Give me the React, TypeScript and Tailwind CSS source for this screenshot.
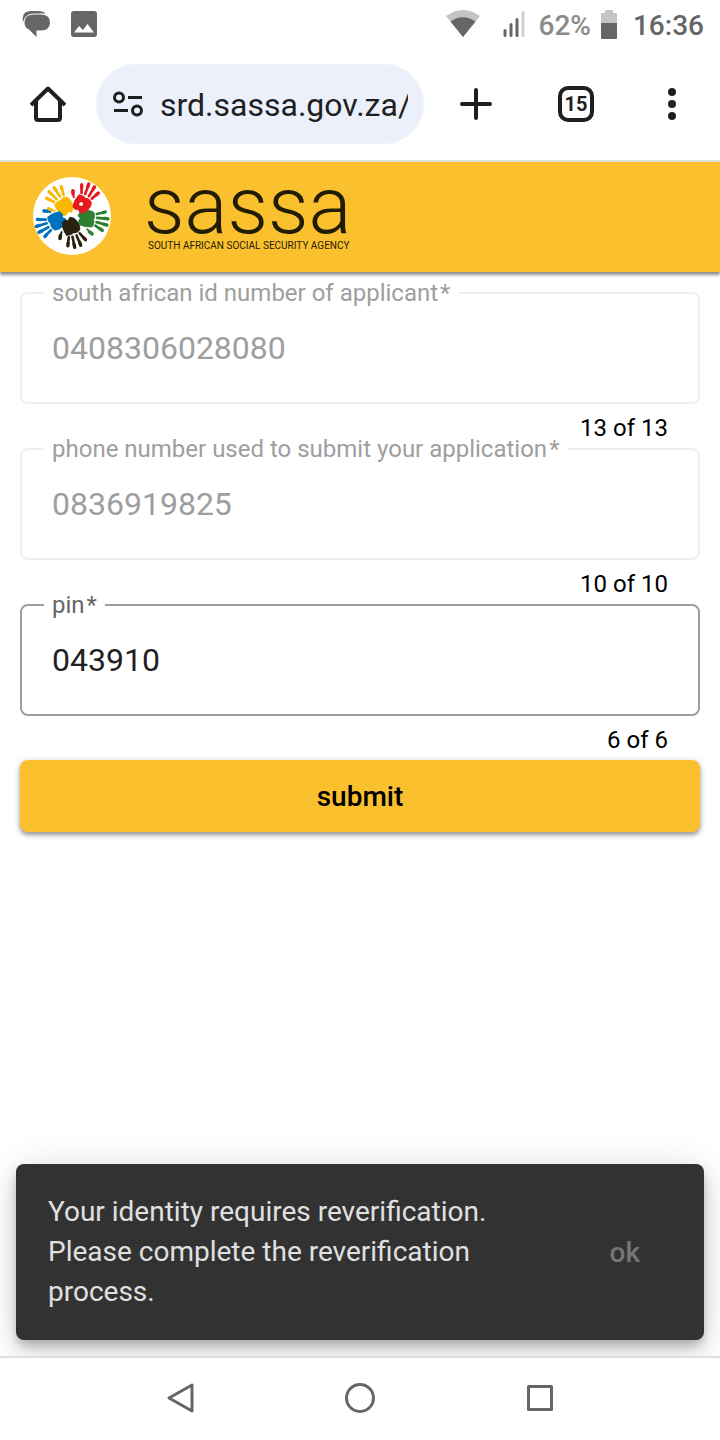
import { useState } from "react";

type FieldProps = {
  id: string;
  label: string;
  initial: string;
  max: number;
  disabled?: boolean;
};

function Field({ id, label, initial, max, disabled }: FieldProps) {
  const [value, setValue] = useState(initial);
  return (
    <div>
      <fieldset
        className={`min-w-0 rounded-lg border-2 px-[22px] pb-2.5 ${disabled ? "border-[#f0f0f0]" : "border-[#9e9e9e]"}`}
      >
        <legend
          className={`px-2 text-2xl leading-5 whitespace-nowrap ${disabled ? "text-[#9e9e9e]" : "text-[#666666]"}`}
        >
          <label htmlFor={id}>
            {label}
            <span className="ml-0.5">*</span>
          </label>
        </legend>
        <input
          id={id}
          value={value}
          maxLength={max}
          disabled={disabled}
          inputMode="numeric"
          onChange={(e) => setValue(e.target.value)}
          className="block h-[89px] w-full bg-transparent px-2 text-[32px] text-[#212121] outline-none disabled:text-[#9e9e9e]"
        />
      </fieldset>
      <p className="px-8 pt-[13px] text-right text-2xl leading-[22px] text-black">
        {value.length} of {max}
      </p>
    </div>
  );
}

const hands = [
  { color: "#fbb800", x: 120, y: 106, angle: -38, flip: 1 },
  { color: "#0071bd", x: 96, y: 154, angle: 246, flip: -1 },
  { color: "#28220f", x: 142, y: 172, angle: 161, flip: -1 },
  { color: "#2e8031", x: 191, y: 146, angle: 99, flip: -1 },
  { color: "#e31b1f", x: 176, y: 100, angle: 27, flip: 1 },
];

function HandsLogo() {
  return (
    <svg viewBox="27 21 234 234" className="size-[78px] shrink-0" aria-hidden="true">
      <circle cx="144" cy="138" r="117" fill="#fff" />
      {hands.map((h) => (
        <g
          key={h.color}
          transform={`translate(${h.x} ${h.y}) rotate(${h.angle}) scale(${h.flip} 1)`}
          fill={h.color}
          stroke={h.color}
        >
          <path
            d="M-22-18Q-8-23 0-18Q11-23 22-15Q28-2 23 10Q18 27 5 30L-3 22Q-11 31-22 22Q-28 3-22-18Z"
            strokeWidth="2"
            strokeLinejoin="round"
          />
          <g fill="none" strokeLinecap="round">
            <path d="M-17-26L-27-46M-6-28L-10-60M7-28L9-60M18-25L27-47" strokeWidth="8" />
            <path d="M-24-41L-28-49M-9-50L-10-60M9-50L9-60M25-42L28-49" strokeWidth="10" />
            <path d="M-32-4L-40-14" strokeWidth="6" />
            <path d="M-39-13L-43-20" strokeWidth="11" />
          </g>
        </g>
      ))}
      <path d="M165 101Q170 94 177 98L176 107L167 107Z" fill="#fff" />
    </svg>
  );
}

function StatusBar() {
  return (
    <div className="flex h-12 items-center pr-4 pl-[22px] text-[28px] leading-8 font-medium">
      <svg viewBox="0 0 28 28" className="size-7" aria-hidden="true">
        <path d="M1 12Q-1 1 9 1H16Q22 1 23.500 3.500H12Q3 3.500 1 12Z" fill="#666" />
        <path d="M12 4.500H18.500Q28 4.500 28 12.500Q28 20.500 18.500 20.500H14.500V27L7 19.500Q2.500 18 2.500 12.500Q2.500 4.500 12 4.500Z" fill="#666" />
      </svg>
      <svg viewBox="0 0 26 26" className="ml-[21px] size-[26px]" aria-hidden="true">
        <rect width="26" height="26" rx="3" fill="#666" />
        <path d="M3 21.500L8 15L12 19L16.500 13L23 21.500Z" fill="#fff" />
      </svg>
      <svg viewBox="0 0 34 28" className="ml-auto h-7 w-[34px]" aria-hidden="true">
        <path d="M0 6Q17-6 34 6L17 27Z" fill="#c4c4c4" />
        <path d="M4.500 11.500Q17 3 29.500 11.500L17 27Z" fill="#666" />
      </svg>
      <svg viewBox="0 0 22 28" className="ml-[23px] h-7 w-[22px]" aria-hidden="true">
        <g strokeWidth="3" strokeLinecap="round" stroke="#666">
          <path d="M2 20.500V25.500M8 14.500V25.500M14 9.500V25.500" />
          <path d="M20 2.500V25.500" stroke="#d0d0d0" />
        </g>
      </svg>
      <span className="ml-3.5 pt-1 text-[#8a8a8a]">62%</span>
      <svg viewBox="0 0 16 29" className="ml-2.5 h-[29px] w-4" aria-hidden="true">
        <path d="M4 0H12V3H16V14H0V3H4Z" fill="#c4c4c4" />
        <path d="M0 13H16V28Q16 29 15 29H1Q0 29 0 28Z" fill="#666" />
      </svg>
      <span className="ml-4 pt-1 font-medium text-[#666666]">16:36</span>
    </div>
  );
}

function BrowserBar() {
  return (
    <div className="flex h-28 items-center text-[#1f1f1f]">
      <button aria-label="Home" className="flex h-20 w-24 shrink-0 items-center justify-center">
        <svg viewBox="0 0 36 36" className="size-9" fill="none" stroke="currentColor" strokeWidth="4" aria-hidden="true">
          <path d="M1 19L18 2.500L35 19" strokeLinejoin="round" />
          <path d="M6 15V32Q6 34 8 34H28Q30 34 30 32V15" />
        </svg>
      </button>
      <div className="flex h-20 min-w-0 flex-1 items-center rounded-full bg-[#ecf0fa] px-4">
        <button aria-label="Site information" className="shrink-0">
          <svg viewBox="0 0 32 32" className="size-8" fill="none" stroke="currentColor" strokeWidth="3" aria-hidden="true">
            <circle cx="7" cy="9.500" r="4.500" />
            <path d="M16 9.500H30M2 22.500H16" />
            <circle cx="25" cy="22.500" r="4.500" />
          </svg>
        </button>
        <input
          aria-label="Address"
          defaultValue="srd.sassa.gov.za/"
          className="ml-4 min-w-0 flex-1 bg-transparent pt-0.5 text-[32px] outline-none"
        />
      </div>
      <button aria-label="New tab" className="flex h-20 w-[104px] shrink-0 items-center justify-center">
        <svg viewBox="0 0 32 32" className="size-8" stroke="currentColor" strokeWidth="4" strokeLinecap="round" aria-hidden="true">
          <path d="M16 2V30M2 16H30" />
        </svg>
      </button>
      <button aria-label="Open tabs" className="flex h-20 w-24 shrink-0 items-center justify-center">
        <span className="flex size-9 items-center justify-center rounded-[10px] border-4 border-[#1f1f1f] text-xl leading-5 font-bold">
          15
        </span>
      </button>
      <button aria-label="Menu" className="flex h-20 w-24 shrink-0 items-center justify-center">
        <svg viewBox="0 0 8 32" className="h-8 w-2" fill="currentColor" aria-hidden="true">
          <circle cx="4" cy="4" r="4" />
          <circle cx="4" cy="16" r="4" />
          <circle cx="4" cy="28" r="4" />
        </svg>
      </button>
    </div>
  );
}

export default function App() {
  return (
    <div className="flex min-h-screen flex-col bg-white font-['Roboto',sans-serif]">
      <StatusBar />
      <BrowserBar />
      <header className="flex h-28 items-center border-t-2 border-[#e0e0e0] bg-[#fbc02d] pb-0.5 pl-[33px] shadow-[0_3px_3px_rgba(0,0,0,0.45)]">
        <HandsLogo />
        <div className="ml-[37px] pb-1 text-[#231c05]">
          <div className="-ml-1 text-[80px] leading-[60px] font-light">sassa</div>
          <div className="mt-1 text-[10px] leading-3">SOUTH AFRICAN SOCIAL SECURITY AGENCY</div>
        </div>
      </header>
      <main className="flex flex-1 flex-col">
        <form className="flex flex-col px-5 pt-[11px]" onSubmit={(e) => e.preventDefault()}>
          <Field id="id-number" label="south african id number of applicant" initial="0408306028080" max={13} disabled />
          <Field
            id="phone"
            label="phone number used to submit your application"
            initial="0836919825"
            max={10}
            disabled
          />
          <Field id="pin" label="pin" initial="043910" max={6} />
          <button
            type="submit"
            className="mt-[9px] h-[72px] rounded-lg bg-[#fbc02d] pt-0.5 text-[28px] font-medium text-black shadow-[0_3px_4px_rgba(0,0,0,0.35),0_1px_8px_rgba(0,0,0,0.14)]"
          >
            submit
          </button>
        </form>
        <div
          role="status"
          className="mx-4 mt-auto mb-4 flex items-center justify-between rounded-lg bg-[#323232] py-7 pr-16 pl-8 shadow-[0_6px_10px_-2px_rgba(0,0,0,0.2),0_12px_20px_rgba(0,0,0,0.14),0_2px_36px_rgba(0,0,0,0.12)]"
        >
          <p className="max-w-[480px] text-[28px] leading-10 text-[#e0e0e0]">
            Your identity requires reverification. Please complete the reverification process.
          </p>
          <button className="pt-0.5 text-[28px] leading-10 font-medium text-[#757575]">ok</button>
        </div>
      </main>
      <nav className="relative flex h-[84px] items-center justify-center border-t-2 border-[#e0e0e0] bg-white pb-0.5 text-[#666666]">
        <button aria-label="Back" className="flex h-16 w-1/4 items-center justify-center">
          <svg viewBox="0 0 32 32" className="size-8" fill="none" stroke="currentColor" strokeWidth="3" strokeLinejoin="round" aria-hidden="true">
            <path d="M5 16L28 3V29Z" />
          </svg>
        </button>
        <button aria-label="Home screen" className="flex h-16 w-1/4 items-center justify-center">
          <svg viewBox="0 0 32 32" className="size-8" fill="none" stroke="currentColor" strokeWidth="3" aria-hidden="true">
            <circle cx="16" cy="16" r="13.500" />
          </svg>
        </button>
        <button aria-label="Recent apps" className="flex h-16 w-1/4 items-center justify-center">
          <svg viewBox="0 0 32 32" className="size-8" fill="none" stroke="currentColor" strokeWidth="3" strokeLinejoin="round" aria-hidden="true">
            <rect x="4.500" y="4.500" width="23" height="23" />
          </svg>
        </button>
      </nav>
    </div>
  );
}
